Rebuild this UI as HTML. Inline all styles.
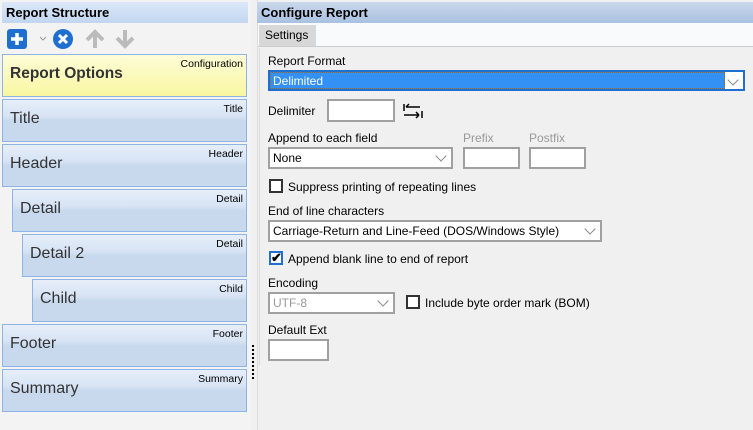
<!DOCTYPE html>
<html><head><style>
*{margin:0;padding:0;box-sizing:border-box}
body{width:753px;height:430px;background:#f0f0f0;font-family:"Liberation Sans",sans-serif;font-size:12px;color:#000;position:relative;overflow:hidden}
.a{position:absolute}
.hdr{background:linear-gradient(#dce8f8,#c2d6f0);font-weight:bold;font-size:13px;padding:3px 0 0 4px;color:#000}
.band{position:absolute;height:43px;border:1px solid #8eb4e6;background:linear-gradient(#e6eef9 0,#d7e3f4 40%,#c8d9ee 50%,#c8d9ee 100%)}
.band .t{position:absolute;left:7px;top:10px;font-size:16px;color:#333}
.band .s{position:absolute;right:3px;top:3px;font-size:10.5px;color:#000}
.lbl{position:absolute;font-size:12px;color:#000}
.box{position:absolute;background:#fff;border:2px solid #a0a0a0}
.dd::after{content:"";position:absolute;right:6px;top:3px;width:7px;height:7px;border-right:1px solid #888;border-bottom:1px solid #888;transform:rotate(45deg)}
.cb{position:absolute;width:14px;height:14px;border:2px solid #333;background:#fff}
</style></head><body>
<div class="a" style="left:0;top:0;width:251px;height:430px;background:#f3f3f3"></div>
<div class="a hdr" style="left:2px;top:2px;width:246px;height:21px">Report Structure</div>
<svg class="a" style="left:6px;top:28px" width="130" height="22">
<rect x="1" y="1" width="20" height="20" rx="3" fill="#1e6fd0"/><path d="M11 5v12M5 11h12" stroke="#fff" stroke-width="3.5"/>
<path d="M34 9l3 3 3-3" stroke="#999" fill="none"/>
<circle cx="57" cy="11" r="10" fill="#1e6fd0"/><path d="M53 7l8 8M61 7l-8 8" stroke="#fff" stroke-width="3"/>
<path d="M89 20V5M81 12l8-8 8 8" stroke="#bbb" stroke-width="4" fill="none"/>
<path d="M119 2v15M111 10l8 8 8-8" stroke="#bbb" stroke-width="4" fill="none"/>
</svg>
<div class="band" style="left:2px;width:245px;top:54px;height:43px;background:linear-gradient(#fdfdd8,#f8f6a0)"><div class="t" style="font-weight:bold;top:10px;font-size:15.5px">Report Options</div><div class="s">Configuration</div></div>
<div class="band" style="left:2px;width:245px;top:99px"><div class="t">Title</div><div class="s">Title</div></div>
<div class="band" style="left:2px;width:245px;top:144px"><div class="t">Header</div><div class="s">Header</div></div>
<div class="band" style="left:12px;width:235px;top:189px"><div class="t">Detail</div><div class="s">Detail</div></div>
<div class="band" style="left:22px;width:225px;top:234px"><div class="t">Detail 2</div><div class="s">Detail</div></div>
<div class="band" style="left:32px;width:215px;top:279px"><div class="t">Child</div><div class="s">Child</div></div>
<div class="band" style="left:2px;width:245px;top:324px"><div class="t">Footer</div><div class="s">Footer</div></div>
<div class="band" style="left:2px;width:245px;top:369px"><div class="t">Summary</div><div class="s">Summary</div></div>
<div class="a" style="left:252px;top:345px;width:2px;height:34px;border-left:2px dotted #000"></div>
<div class="a" style="left:257px;top:0;width:1px;height:430px;background:#ddd"></div>
<div class="a hdr" style="left:257px;top:2px;width:496px;height:21px;background:linear-gradient(#cad8ea,#a9c1e2)">Configure Report</div>
<div class="a" style="left:258px;top:23px;width:495px;height:24px;background:#f8fafc;border-bottom:1px solid #ccc"></div>
<div class="a" style="left:259px;top:25px;width:57px;height:21px;background:#d8d8d8;padding:3px 0 0 6px">Settings</div>
<div class="a" style="left:259px;top:48px;width:494px;height:318px;background:#f0f0f0;border-left:1px solid #ddd"></div>
<div class="lbl" style="left:268px;top:54px">Report Format</div>
<div class="a" style="left:268px;top:70px;width:477px;height:21px;background:#fff;border:2px solid #1e6fd0"></div>
<div class="a" style="left:270px;top:72px;width:455px;height:17px;background:#3390f5;border:1px dotted #b06000;color:#fff;padding:1px 0 0 2px">Delimited</div>
<div class="a dd" style="left:725px;top:73px;width:18px;height:15px"></div>
<div class="lbl" style="left:268px;top:104px">Delimiter</div>
<div class="box" style="left:327px;top:99px;width:68px;height:23px"></div>
<svg class="a" style="left:403px;top:103px" width="20" height="16"><path d="M1 1v7M3 4h14M3 4l3-3M19 8v7M1 12h15M16 12l-3-3M16 12l-3 3" stroke="#000" stroke-width="1.5" fill="none"/></svg>
<div class="lbl" style="left:268px;top:131px">Append to each field</div>
<div class="lbl" style="left:463px;top:131px;color:#999">Prefix</div>
<div class="lbl" style="left:529px;top:131px;color:#999">Postfix</div>
<div class="box dd" style="left:268px;top:147px;width:185px;height:22px;padding:2px 0 0 3px">None</div>
<div class="box" style="left:463px;top:147px;width:57px;height:22px"></div>
<div class="box" style="left:529px;top:147px;width:57px;height:22px"></div>
<div class="cb" style="left:269px;top:179px"></div>
<div class="lbl" style="left:288px;top:180px">Suppress printing of repeating lines</div>
<div class="lbl" style="left:268px;top:204px">End of line characters</div>
<div class="box dd" style="left:268px;top:220px;width:334px;height:22px;padding:2px 0 0 3px">Carriage-Return and Line-Feed (DOS/Windows Style)</div>
<div class="cb" style="left:269px;top:251px;border-color:#1e6fd0;font-size:13px;line-height:10px;text-align:center;font-weight:bold">✔</div>
<div class="lbl" style="left:288px;top:252px">Append blank line to end of report</div>
<div class="lbl" style="left:268px;top:276px">Encoding</div>
<div class="box dd" style="left:268px;top:292px;width:127px;height:22px;padding:2px 0 0 3px;color:#999">UTF-8</div>
<div class="cb" style="left:406px;top:295px"></div>
<div class="lbl" style="left:425px;top:296px">Include byte order mark (BOM)</div>
<div class="lbl" style="left:268px;top:323px">Default Ext</div>
<div class="box" style="left:268px;top:339px;width:61px;height:22px"></div>
</body></html>
